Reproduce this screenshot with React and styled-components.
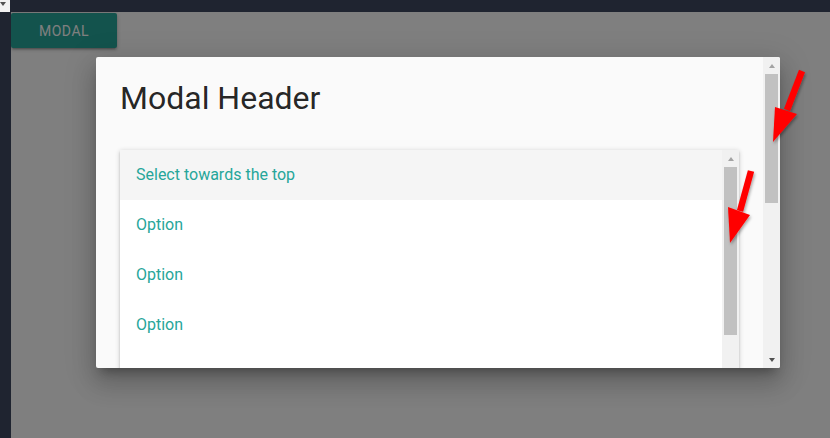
import styled, { createGlobalStyle } from 'styled-components';

const GlobalStyle = createGlobalStyle`
  html, body {
    margin: 0;
    padding: 0;
    height: 100%;
    background: #1f2430;
    font-family: Roboto, "Noto Sans", "Liberation Sans", sans-serif;
  }
  #root { height: 100%; }
`

let Frame = styled.div`
  position: relative;
  height: 100vh;
  display: grid;
  grid-template-columns: 11px 1fr;
  grid-template-rows: 12px 1fr;
  overflow: hidden;
`

let Corner = styled.div`
  grid-column: 1;
  grid-row: 1;
  width: 10px;
  background: #f1f1f1;
  position: relative;
  &::after {
    content: '';
    position: absolute;
    left: 0;
    top: 2px;
    border-left: 3px solid transparent;
    border-right: 3px solid transparent;
    border-top: 4px solid #505050;
  }
`

let Stage = styled.div`
  grid-column: 2;
  grid-row: 2;
  position: relative;
  background: #fff;
  padding-top: 1px;
  overflow: hidden;
`

let OpenBtn = styled.button`
  display: block;
  height: 35px;
  padding: 0 28px;
  border: none;
  border-radius: 2px;
  background: #26a69a;
  color: #fff;
  font-family: inherit;
  font-size: 14px;
  letter-spacing: .5px;
  text-transform: uppercase;
  box-shadow: 0 2px 2px rgba(0,0,0,.14), 0 3px 1px -2px rgba(0,0,0,.12), 0 1px 5px rgba(0,0,0,.2);
`

// 모달 뒤 어두운 배경
let Overlay = styled.div`
  position: absolute;
  inset: 0;
  background: rgba(0,0,0,.5);
`

let Modal = styled.div`
  position: absolute;
  left: 85px;
  top: 45px;
  width: 684px;
  height: 311px;
  display: flex;
  background: #fafafa;
  border-radius: 2px;
  overflow: hidden;
  box-shadow: 0 16px 24px 2px rgba(0,0,0,.14), 0 6px 30px 5px rgba(0,0,0,.12), 0 8px 10px -5px rgba(0,0,0,.3);
`

let ModalContent = styled.div`
  flex: 1;
  min-width: 0;
  padding: 24px 24px 0;
  overflow: hidden;
`

let Header = styled.h4`
  margin: 0 0 34px;
  font-size: 32px;
  font-weight: 400;
  line-height: 35px;
  color: rgba(0,0,0,.87);
`

let Dropdown = styled.div`
  display: flex;
  height: 250px;
  background: #fff;
  box-shadow: 0 2px 2px rgba(0,0,0,.14), 0 3px 1px -2px rgba(0,0,0,.12), 0 1px 5px rgba(0,0,0,.2);
`

let OptionList = styled.ul`
  flex: 1;
  margin: 0;
  padding: 0;
  list-style: none;
  overflow: hidden;
`

let OptionItem = styled.li`
  height: 50px;
  box-sizing: border-box;
  padding: 14px 16px;
  line-height: 22px;
  background: ${ props => props.active ? '#f5f5f5' : '#fff' };
  color: #26a69a;
  font-size: 16px;
`

let Bar = styled.div`
  width: 17px;
  flex: none;
  display: flex;
  flex-direction: column;
  background: #f1f1f1;
`

let ArrowBtn = styled.div`
  height: 17px;
  flex: none;
  display: flex;
  align-items: center;
  justify-content: center;
  &::after {
    content: '';
    border-left: 3.5px solid transparent;
    border-right: 3.5px solid transparent;
    ${ props => props.down
      ? `border-top: 4px solid ${props.color};`
      : `border-bottom: 4px solid ${props.color};` }
  }
`

let Track = styled.div`
  flex: 1;
  display: flex;
  flex-direction: column;
`

let Thumb = styled.div`
  height: ${ props => props.size }px;
  margin: ${ props => props.offset }px 2px 0;
  background: #c1c1c1;
`

function ScrollBar({thumb, offset = 0, downColor = '#505050'}){
    return (
        <Bar>
            <ArrowBtn color="#a3a3a3" />
            <Track>
                <Thumb size={thumb} offset={offset} />
            </Track>
            <ArrowBtn down color={downColor} />
        </Bar>
    )
}

let Notes = styled.svg`
  position: absolute;
  left: 0;
  top: 0;
  width: 830px;
  height: 438px;
  pointer-events: none;
`

function RedArrow({x1, y1, x2, y2, tip, wing}){
    return (
        <g filter="url(#shade)">
            <line x1={x1} y1={y1} x2={x2} y2={y2} stroke="#ff0000" strokeWidth="6.5" />
            <polygon points={`${wing[0]},${wing[1]} ${wing[2]},${wing[3]} ${tip[0]},${tip[1]}`} fill="#ff0000" />
        </g>
    )
}

export default function App(){
    // 아래쪽 옵션은 모달 밖으로 잘려서 안 보임
    let options = ['Option', 'Option', 'Option']

    return (
        <>
            <GlobalStyle />
            <Frame>
                <Corner />
                <Stage>
                    <OpenBtn>Modal</OpenBtn>
                    <Overlay />
                    <Modal>
                        <ModalContent>
                            <Header>Modal Header</Header>
                            <Dropdown>
                                <OptionList>
                                    <OptionItem active>Select towards the top</OptionItem>
                                    {options.map((o, i) => <OptionItem key={i}>{o}</OptionItem>)}
                                </OptionList>
                                <ScrollBar thumb={168} />
                            </Dropdown>
                        </ModalContent>
                        <ScrollBar thumb={129} />
                    </Modal>
                </Stage>
                <Notes viewBox="0 0 830 438">
                    <defs>
                        <filter id="shade" x="-50%" y="-50%" width="200%" height="200%">
                            <feDropShadow dx="1" dy="2" stdDeviation="1.5" floodColor="#000" floodOpacity=".35" />
                        </filter>
                    </defs>
                    <RedArrow x1={802} y1={71} x2={787} y2={110} wing={[775, 107, 797, 114]} tip={[773, 142]} />
                    <RedArrow x1={751} y1={171} x2={740} y2={211} wing={[728, 207, 750, 215]} tip={[730, 243]} />
                </Notes>
            </Frame>
        </>
    )
}
